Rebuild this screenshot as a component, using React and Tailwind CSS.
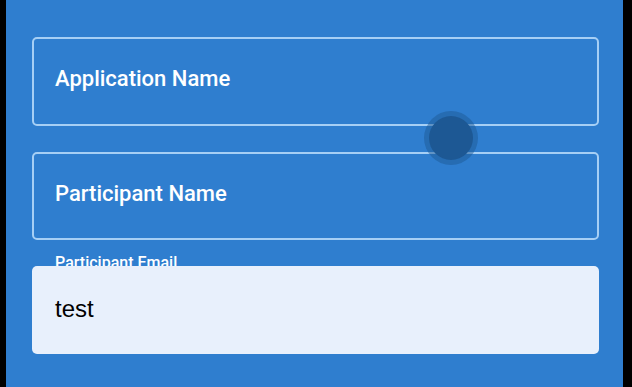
export default function App() {
  return (
    <div className="relative flex h-[387px] w-[632px] overflow-hidden bg-black" style={{ fontFamily: 'Roboto, "Liberation Sans", sans-serif' }}>
      <div className="ml-[6px] flex h-full w-[617px] flex-col bg-[#2f7ecf] pl-[26px] pr-[24px] pt-[37px]">
        <div className="flex h-[89px] items-center rounded-[5px] border-2 border-[#a6cff5] pb-[6px] pl-[21px]">
          <span className="text-[22px] font-medium text-white">Application Name</span>
        </div>
        <div className="mt-[26px] flex h-[88px] items-center rounded-[5px] border-2 border-[#a6cff5] pb-[6px] pl-[21px]">
          <span className="text-[22px] font-medium text-white">Participant Name</span>
        </div>
        <div className="mt-[13px] h-[13px] overflow-hidden pl-[23px]">
          <span className="block text-[16px] font-medium leading-[19px] text-white">Participant Email</span>
        </div>
        <div className="flex h-[88px] items-center rounded-[5px] bg-[#e8f0fc] pb-[2px] pl-[23px]">
          <span className="text-[24px] text-black" style={{ fontFamily: '"Liberation Sans", Arial, sans-serif' }}>test</span>
        </div>
      </div>
      {/* click ripple */}
      <div className="absolute left-[424px] top-[111px] flex h-[54px] w-[54px] items-center justify-center rounded-full bg-[#1e5a96]/50">
        <div className="h-[44px] w-[44px] rounded-full bg-[#1d5894]" />
      </div>
    </div>
  )
}
